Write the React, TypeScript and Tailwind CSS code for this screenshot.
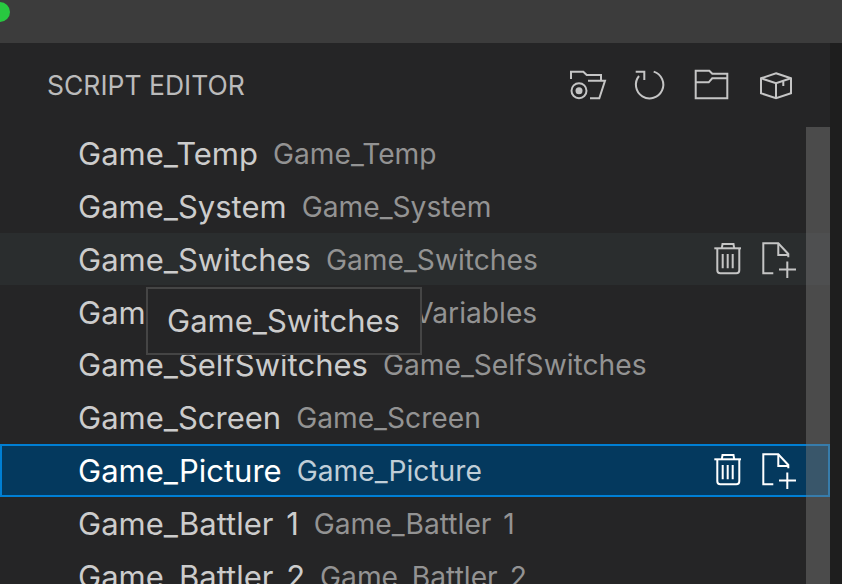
const rows = [
  "Game_Temp",
  "Game_System",
  "Game_Switches",
  "Game_Variables",
  "Game_SelfSwitches",
  "Game_Screen",
  "Game_Picture",
  "Game_Battler 1",
  "Game_Battler 2",
];

const HOVERED = "Game_Switches";
const SELECTED = "Game_Picture";

function IconBase({ w, h, children }: { w: number; h: number; children: React.ReactNode }) {
  return (
    <svg
      width={w}
      height={h}
      viewBox={`0 0 ${w} ${h}`}
      fill="none"
      stroke="currentColor"
      strokeWidth="2"
      className="shrink-0"
    >
      {children}
    </svg>
  );
}

function FolderGearIcon() {
  return (
    <IconBase w={40} h={36}>
      <path d="M3 13V5.7h12.3L18.7 9H33v6" />
      <path d="M20 14.7h17L31.3 32.3H22" />
      <circle cx="11" cy="24.7" r="7.5" />
      <circle cx="11" cy="24.7" r="3.5" fill="currentColor" stroke="none" />
    </IconBase>
  );
}

function RefreshIcon() {
  return (
    <IconBase w={34} h={36}>
      <path d="M1.7 5.7h8.6V14" />
      <path d="M19.7 5.6A13.7 13.7 0 1 1 5 10" />
    </IconBase>
  );
}

function FolderIcon() {
  return (
    <IconBase w={36} h={36}>
      <path d="M2.7 4.7h13.6l3 3H34.3v24.6H2.7z" />
      <path d="M2.7 16.3h13l3.5-4H34.3" />
    </IconBase>
  );
}

function BoxIcon() {
  return (
    <IconBase w={34} h={36}>
      <path d="M17 7.3l15 5v15l-15 5-15-5v-15z" />
      <path d="M2 12.3l15 5 15-5M17 17.3v15M24.3 14.7V20" />
    </IconBase>
  );
}

function TrashIcon() {
  return (
    <IconBase w={30} h={34}>
      <path d="M2.3 5.3h26.7" />
      <path d="M5.3 5.3v22q0 3 3 3h16q3 0 3-3v-22" />
      <path d="M9.8 5.3l.7-4.3h11l.7 4.3" />
      <path d="M10.7 11v14.3M15.7 11v14.3M20.7 11v14.3" />
    </IconBase>
  );
}

function NewFileIcon() {
  return (
    <IconBase w={38} h={36}>
      <path d="M13.3 31.3H3.3V1.3h15l10 10.7v3.3" />
      <path d="M18.3 1.3v11.7h10" />
      <path d="M27.3 19.6v16.7M19 27.6h17" />
    </IconBase>
  );
}

function Row({ name }: { name: string }) {
  const selected = name === SELECTED;
  const hovered = name === HOVERED;

  return (
    <div
      className={`flex items-center h-[52.8px] shrink-0 pt-[2px] pl-[78px] pr-[32px] [word-spacing:4px] ${
        selected ? "bg-[#04395e] outline-2 -outline-offset-2 outline-[#007fd4] text-white" : ""
      } ${hovered ? "bg-[#2a2d2e]" : ""} ${!selected ? "text-[#cccccc]" : ""}`}
    >
      <span className="text-[31px] whitespace-nowrap">{name}</span>
      <span
        className={`ml-[15px] text-[28.2px] whitespace-nowrap ${
          selected ? "text-[#c0ced8]" : "text-[#939393]"
        }`}
      >
        {name}
      </span>
      {(selected || hovered) && (
        <div className={`ml-auto flex items-center gap-[18px] ${selected ? "text-white" : "text-[#c5c5c5]"}`}>
          <TrashIcon />
          <NewFileIcon />
        </div>
      )}
    </div>
  );
}

export default function App() {
  return (
    <div className="flex flex-col h-[584px] w-[842px] overflow-hidden bg-[#252526] font-['Inter',sans-serif]">
      {/* Title bar */}
      <div className="h-[43px] shrink-0 bg-[#3c3c3c] pt-[2px]">
        <div className="w-[10px] h-[20px] rounded-r-full bg-[#28c840]" />
      </div>

      <div className="flex flex-1 min-h-0">
        {/* Sidebar */}
        <div className="w-[830px] flex flex-col">
          <div className="h-[84px] shrink-0 flex items-center pl-[47px] pr-[37px] pb-[2px]">
            <span className="mt-[4px] text-[26.5px] text-[#bbbbbb]">SCRIPT EDITOR</span>
            <div className="ml-auto flex items-center text-[#c5c5c5]">
              <FolderGearIcon />
              <div className="ml-[26px]">
                <RefreshIcon />
              </div>
              <div className="ml-[25px]">
                <FolderIcon />
              </div>
              <div className="ml-[30px]">
                <BoxIcon />
              </div>
            </div>
          </div>

          <div className="relative flex-1 min-h-0 flex flex-col overflow-hidden">
            {rows.map((name) => (
              <Row key={name} name={name} />
            ))}

            {/* Scrollbar thumb */}
            <div className="absolute top-0 bottom-0 right-0 w-[24px] bg-[#797979]/45" />

            {/* Tooltip */}
            <div className="absolute left-[146px] top-[160px] h-[68px] pl-[19px] pr-[20px] flex items-center border-2 border-[#454545] bg-[#252526] text-[#cccccc] text-[31px] whitespace-nowrap">
              Game_Switches
            </div>
          </div>
        </div>

        <div className="flex-1 bg-[#1e1e1e]" />
      </div>
    </div>
  );
}
